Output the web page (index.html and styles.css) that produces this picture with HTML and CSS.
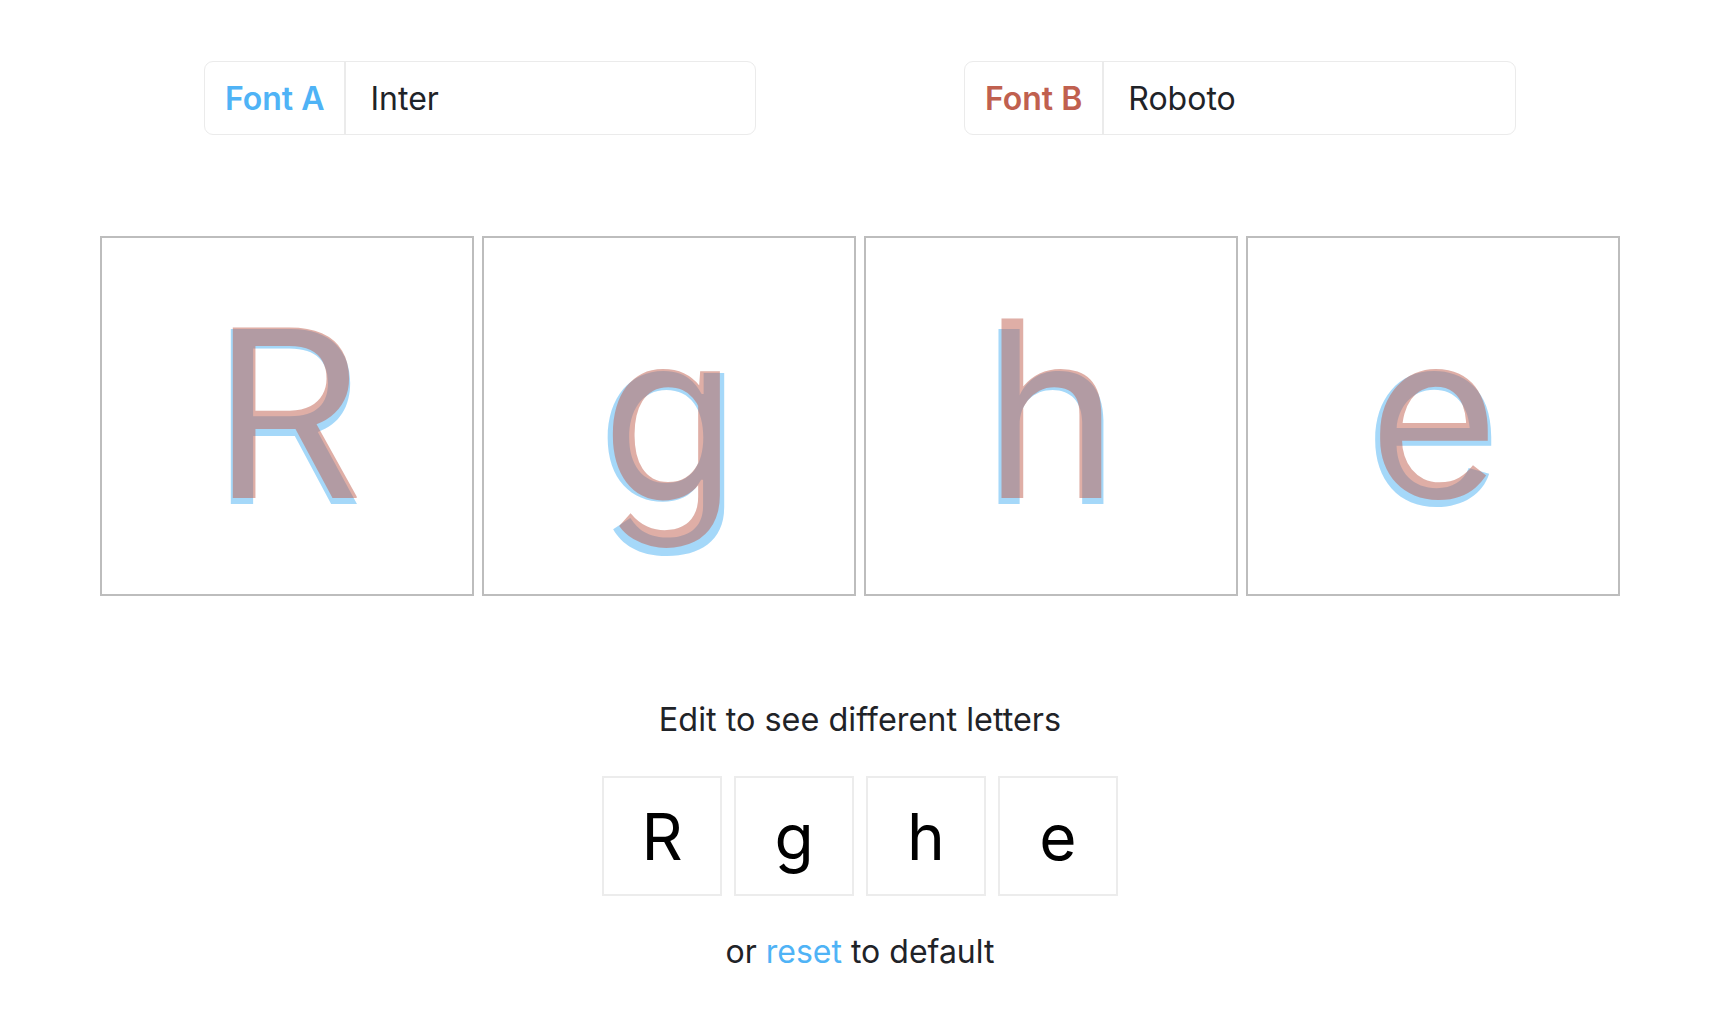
FILE: index.html
```html
<!DOCTYPE html>
<html lang="en">
<head>
<meta charset="utf-8">
<title>Font overlay</title>
<link rel="stylesheet" href="styles.css">
</head>
<body>
<main class="page">
  <section class="fonts">
    <div class="field">
      <label class="field-label label-a" for="font-a">Font A</label>
      <input class="field-input" id="font-a" type="text" value="Inter">
    </div>
    <div class="field">
      <label class="field-label label-b" for="font-b">Font B</label>
      <input class="field-input" id="font-b" type="text" value="Roboto">
    </div>
  </section>

  <section class="glyphs">
    <div class="glyph"><span class="g-a">R</span><span class="g-b">R</span></div>
    <div class="glyph"><span class="g-a">g</span><span class="g-b">g</span></div>
    <div class="glyph"><span class="g-a">h</span><span class="g-b">h</span></div>
    <div class="glyph"><span class="g-a">e</span><span class="g-b">e</span></div>
  </section>

  <p class="hint">Edit to see different letters</p>

  <div class="letters">
    <input class="letter" type="text" value="R" maxlength="1">
    <input class="letter" type="text" value="g" maxlength="1">
    <input class="letter" type="text" value="h" maxlength="1">
    <input class="letter" type="text" value="e" maxlength="1">
  </div>

  <p class="reset">or <a class="reset-link" href="#">reset</a> to default</p>
</main>
</body>
</html>
```

FILE: styles.css
```css
html, body {
  margin: 0;
  padding: 0;
  background: #ffffff;
}

body {
  font-family: Inter, "Noto Sans", sans-serif;
  color: #1f2328;
}

.page {
  width: 1520px;
  margin: 0 0 0 100px;
  padding-top: 61px;
  padding-bottom: 40px;
}

.fonts {
  display: grid;
  grid-template-columns: 1fr 1fr;
  justify-items: center;
}

.field {
  width: 552px;
  height: 74px;
  box-sizing: border-box;
  display: flex;
  align-items: stretch;
  border: 1px solid #ebebeb;
  border-radius: 9px;
  overflow: hidden;
}

.field-label {
  display: flex;
  align-items: center;
  padding: 0 20px;
  border-right: 2px solid #ebebeb;
  font-size: 32px;
  font-weight: 600;
  white-space: nowrap;
}

.label-a { color: #4fb3f6; }
.label-b { color: #c0604f; }

.field-input {
  flex: 1;
  min-width: 0;
  border: none;
  outline: none;
  padding: 0 0 0 24px;
  margin: 0;
  font-family: Inter, "Noto Sans", sans-serif;
  font-size: 32px;
  color: #1f2328;
  background: transparent;
}

.glyphs {
  display: flex;
  gap: 8px;
  margin-top: 101px;
}

.glyph {
  width: 374px;
  height: 360px;
  box-sizing: border-box;
  border: 2px solid #bdbdbd;
  display: grid;
  align-items: center;
  justify-items: center;
}

.glyph span {
  grid-area: 1 / 1;
  font-size: 240px;
  line-height: normal;
  font-weight: 400;
  opacity: 0.5;
}

.g-a {
  font-family: Inter, sans-serif;
  color: #4db3f5;
}

.g-b {
  font-family: Roboto, sans-serif;
  color: #c0604f;
}

.hint {
  margin: 104px 0 0;
  text-align: center;
  font-size: 32.4px;
  line-height: 40px;
}

.letters {
  display: flex;
  justify-content: center;
  gap: 12px;
  margin-top: 36px;
}

.letter {
  width: 120px;
  height: 120px;
  box-sizing: border-box;
  border: 2px solid #ececec;
  margin: 0;
  padding: 0;
  outline: none;
  text-align: center;
  font-family: Inter, sans-serif;
  font-size: 64px;
  color: #000000;
  background: #ffffff;
}

.reset {
  margin: 36px 0 0;
  text-align: center;
  font-size: 32px;
  line-height: 40px;
}

.reset-link {
  color: #4fb3f6;
  text-decoration: none;
}
```
